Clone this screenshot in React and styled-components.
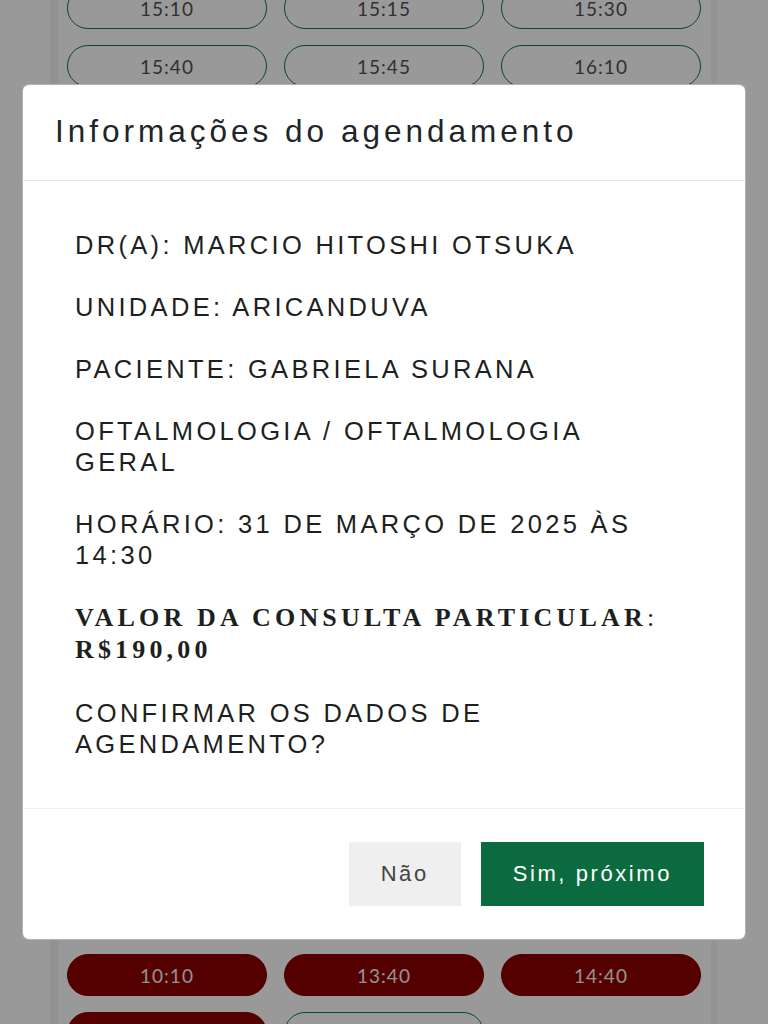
import React from 'react';
import styled, { createGlobalStyle } from 'styled-components';

const GlobalStyle = createGlobalStyle`
  html, body {
    margin: 0;
    padding: 0;
    background: #ffffff;
    font-family: 'Liberation Sans', Arial, sans-serif;
    overflow: hidden;
  }
`;

const Page = styled.div`
  width: 768px;
  height: 1024px;
  overflow: hidden;
  position: relative;
  background: #ffffff;
`;

const Panel = styled.section`
  margin: 0 51px 0 50px;
  height: 1100px;
  border-left: 8px solid #f3f3f3;
  border-right: 6px solid #f6f6f6;
  padding: 0 11px 0 9px;
`;

const SlotGrid = styled.div`
  display: grid;
  grid-template-columns: repeat(3, 200px);
  column-gap: 17px;
  row-gap: 16px;
  margin-top: ${p => p.$offset}px;
`;

const Slot = styled.button`
  height: 42px;
  border-radius: 21px;
  border: 1.5px solid ${p => (p.$busy ? '#8c0000' : '#0f7a42')};
  background: ${p => (p.$busy ? '#8c0000' : '#ffffff')};
  color: ${p => (p.$busy ? '#f3f3f3' : '#505050')};
  font-family: Lato, 'Liberation Sans', sans-serif;
  font-size: 19px;
  letter-spacing: 1px;
  font-weight: 400;
  padding: 0;
`;

const Overlay = styled.div`
  position: absolute;
  inset: 0;
  background: rgba(0, 0, 0, 0.4);
`;

const Modal = styled.div`
  position: absolute;
  left: 22px;
  top: 84px;
  width: 722px;
  height: 854px;
  background: #ffffff;
  border: 1px solid rgba(0, 0, 0, 0.3);
  border-radius: 7px;
  display: flex;
  flex-direction: column;
  color: #212529;
`;

const Header = styled.header`
  height: 95px;
  padding: 0 32px;
  display: flex;
  align-items: center;
  border-bottom: 1px solid #e6e8ea;
`;

const Title = styled.h4`
  margin: 0;
  font-size: 31.5px;
  letter-spacing: 0.127em;
  font-weight: 400;
  font-family: 'Liberation Sans', Arial, sans-serif;
  padding-bottom: 2px;
`;

const Body = styled.div`
  flex: 1;
  padding: 49px 64px 0 52px;
  border-bottom: 1px solid #eef0f1;
`;

const Line = styled.p`
  margin: 0 0 31px;
  font-size: 25.5px;
  line-height: 31px;
  letter-spacing: 0.13em;
  text-transform: uppercase;
  font-family: 'Liberation Sans', Arial, sans-serif;
  color: #1d1f21;
`;

const Price = styled(Line)`
  font-family: 'Liberation Serif', 'Times New Roman', serif;
  font-size: 26px;
  line-height: 32px;
  letter-spacing: 0.16em;
  margin-bottom: 32px;
  b {
    font-weight: 700;
  }
`;

const Footer = styled.footer`
  height: 130px;
  display: flex;
  align-items: center;
  justify-content: flex-end;
  gap: 20px;
  padding: 0 41px 0 32px;
`;

const Button = styled.button`
  height: 64px;
  border: none;
  border-radius: 0;
  padding: 0 32px;
  background: ${p => (p.$primary ? '#0b6b3f' : '#efefef')};
  color: ${p => (p.$primary ? '#ffffff' : '#444444')};
  font-family: 'Liberation Sans', Arial, sans-serif;
  font-size: 22px;
  letter-spacing: 0.117em;
`;

const topSlots = ['15:10', '15:15', '15:30', '15:40', '15:45', '16:10'];
const bottomSlots = [
  { t: '10:10', busy: true },
  { t: '13:40', busy: true },
  { t: '14:40', busy: true },
  { t: '15:00', busy: true },
  { t: '15:20', busy: false },
];

export default function App() {
  return (
    <Page>
      <GlobalStyle />
      <Panel>
        <SlotGrid $offset={-13}>
          {topSlots.map(t => (
            <Slot key={t}>{t}</Slot>
          ))}
        </SlotGrid>
        <SlotGrid $offset={867}>
          {bottomSlots.map(s => (
            <Slot key={s.t} $busy={s.busy}>{s.t}</Slot>
          ))}
        </SlotGrid>
      </Panel>
      <Overlay />
      <Modal>
        <Header>
          <Title>Informações do agendamento</Title>
        </Header>
        <Body>
          <Line>DR(A): MARCIO HITOSHI OTSUKA</Line>
          <Line>UNIDADE: ARICANDUVA</Line>
          <Line>PACIENTE: GABRIELA SURANA</Line>
          <Line>OFTALMOLOGIA / OFTALMOLOGIA GERAL</Line>
          <Line>HORÁRIO: 31 DE MARÇO DE 2025 ÀS 14:30</Line>
          <Price>
            <b>VALOR DA CONSULTA PARTICULAR</b>: <b>R$190,00</b>
          </Price>
          <Line>CONFIRMAR OS DADOS DE AGENDAMENTO?</Line>
        </Body>
        <Footer>
          <Button>Não</Button>
          <Button $primary>Sim, próximo</Button>
        </Footer>
      </Modal>
    </Page>
  );
}
